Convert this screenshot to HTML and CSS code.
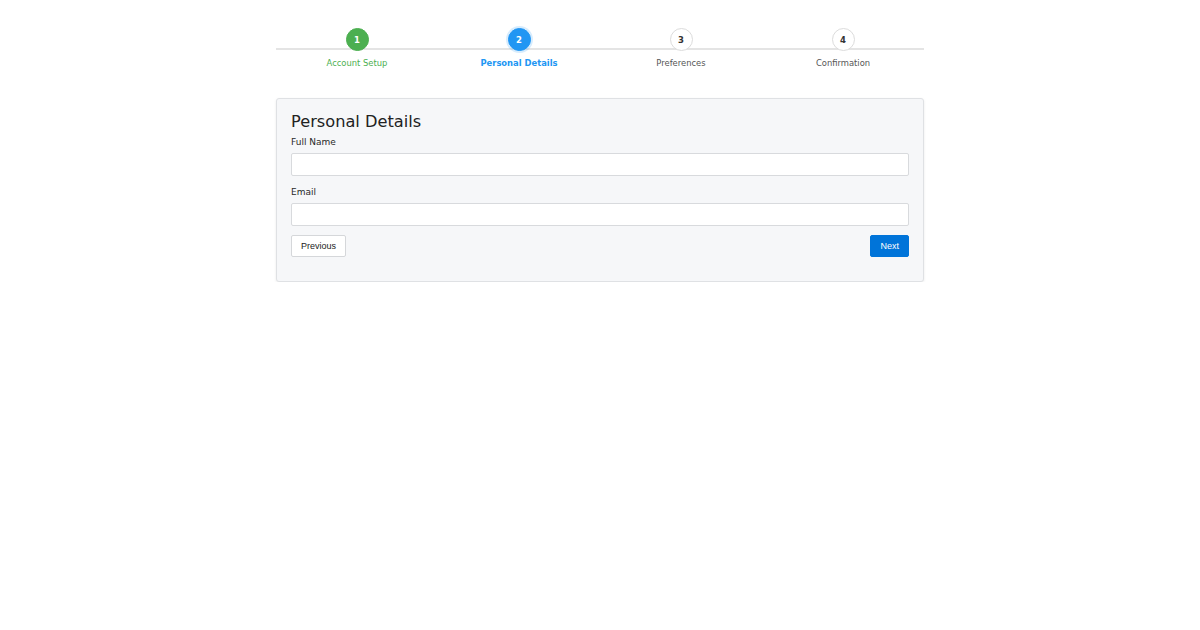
FILE: index.html
```html
<!DOCTYPE html>
<html>
<head>
<meta charset="utf-8">
<link rel="stylesheet" href="styles.css">
</head>
<body>
<div class="wrap">
  <div class="stepper">
    <div class="step done"><div class="dot">1</div><div class="label">Account Setup</div></div>
    <div class="step active"><div class="dot">2</div><div class="label">Personal Details</div></div>
    <div class="step"><div class="dot">3</div><div class="label">Preferences</div></div>
    <div class="step"><div class="dot">4</div><div class="label">Confirmation</div></div>
  </div>
  <div class="card">
    <h2 class="title">Personal Details</h2>
    <div class="field first">
      <label class="flabel">Full Name</label>
      <input class="input" type="text">
    </div>
    <div class="field">
      <label class="flabel">Email</label>
      <input class="input" type="text">
    </div>
    <div class="actions">
      <button class="btn">Previous</button>
      <button class="btn primary">Next</button>
    </div>
  </div>
</div>
</body>
</html>
```

FILE: styles.css
```css
* { box-sizing: border-box; }
html, body { margin: 0; padding: 0; background: #fff; }
body { font-family: "DejaVu Sans", sans-serif; color: #222; }
.wrap { width: 648px; margin: 0 auto; padding-top: 28px; }
.stepper { position: relative; display: flex; }
.stepper::before {
  content: ""; position: absolute; left: 0; right: 0; top: 20px; height: 2px; background: #e4e4e4;
}
.step { position: relative; flex: 1; display: flex; flex-direction: column; align-items: center; }
.dot {
  width: 23px; height: 23px; border-radius: 50%; border: 1px solid #dcdcdc; background: #fff;
  color: #333; font-size: 8.5px; font-weight: bold; display: flex; align-items: center; justify-content: center;
}
.step.done .dot { background: #4caf50; border-color: #4caf50; color: #fff; }
.step.active .dot { background: #2196f3; border-color: #2196f3; color: #fff; box-shadow: 0 0 0 2px rgba(33,150,243,0.18); }
.label { margin-top: 7px; font-size: 8.4px; line-height: 10px; color: #555; }
.step.done .label { color: #4caf50; }
.step.active .label { color: #2196f3; font-weight: bold; }
.card {
  margin-top: 30px; background: #f6f7f9; border: 1px solid #dfe1e4; border-radius: 3px;
  box-shadow: 0 1px 3px rgba(0,0,0,0.08); padding: 13px 14px 24px;
}
.title { margin: 0; font-size: 16.2px; line-height: 19px; font-weight: normal; color: #222; }
.field { display: flex; flex-direction: column; margin-top: 11px; }
.field.first { margin-top: 6px; }
.flabel { font-size: 9px; line-height: 11px; margin-bottom: 5px; color: #282828; }
.input { height: 23px; border: 1px solid #d8dadd; border-radius: 2px; background: #fff; margin: 0; padding: 0 6px; }
.actions { display: flex; justify-content: space-between; margin-top: 9px; }
.btn {
  font-family: "Liberation Sans", Arial, sans-serif; font-size: 9px; height: 22px; padding: 0 9px;
  border: 1px solid #d5d7da; border-radius: 2px; background: #fff; color: #222; margin: 0;
}
.btn.primary { background: #0074d9; border-color: #0074d9; color: #fff; }
```
